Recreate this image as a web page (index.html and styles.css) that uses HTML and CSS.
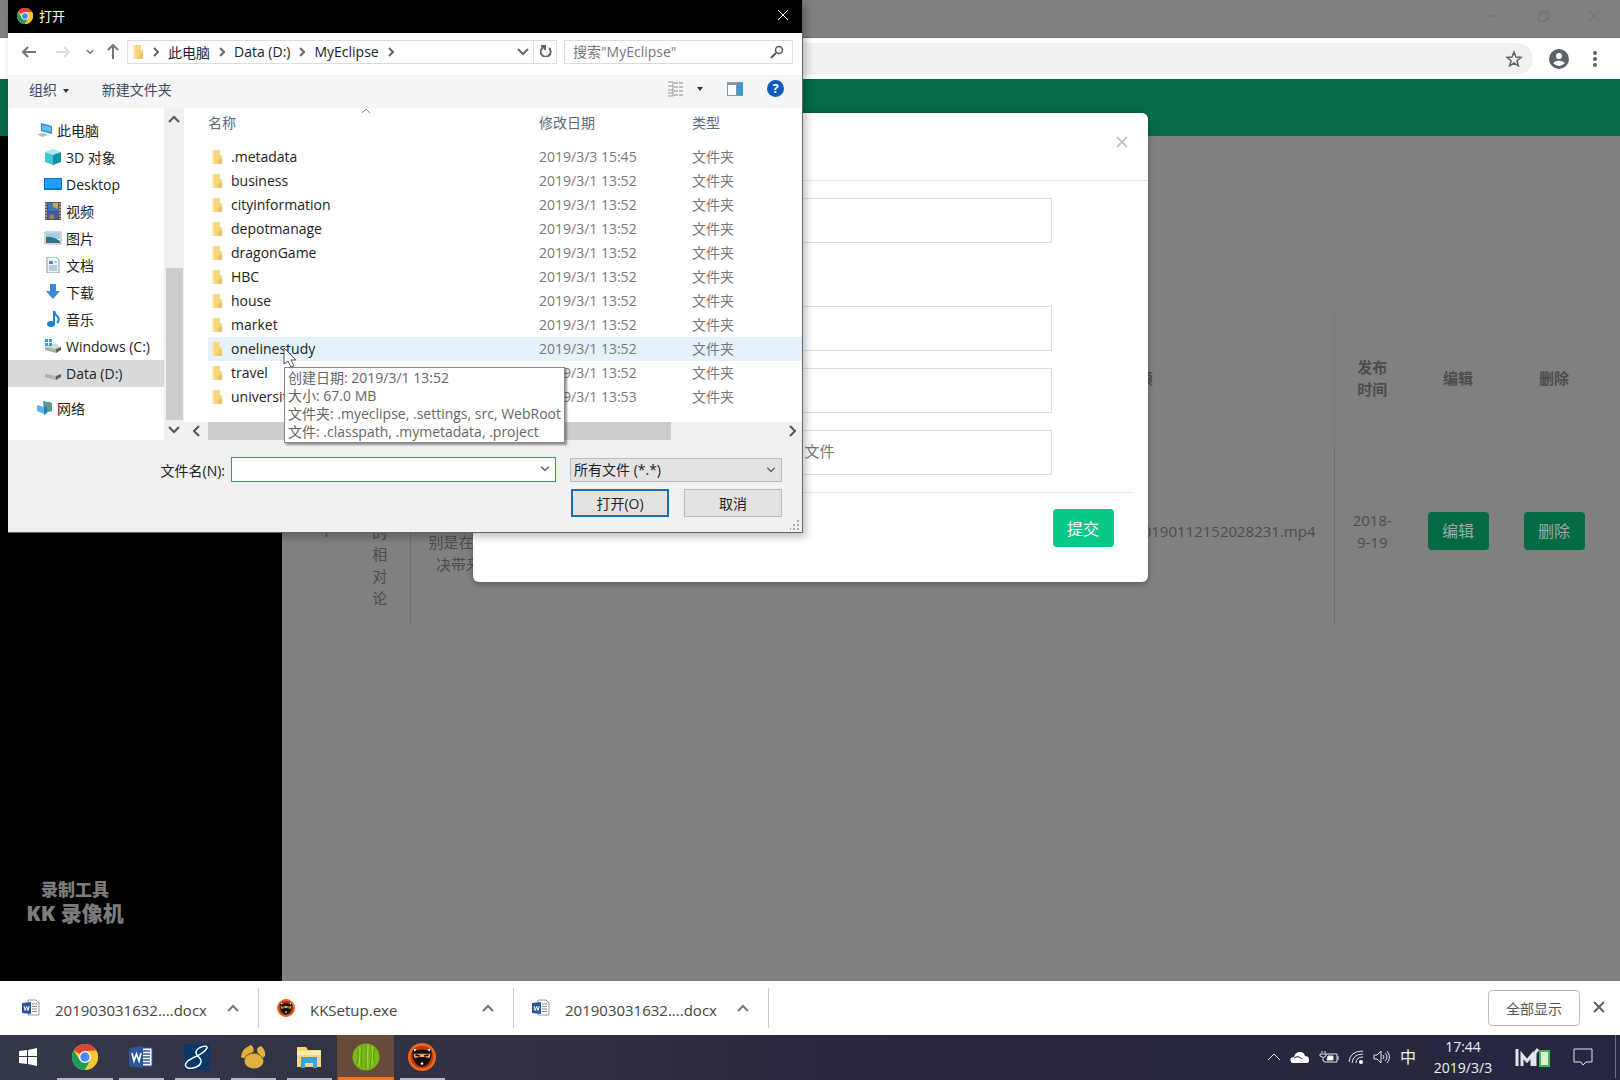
FILE: index.html
```html
<!DOCTYPE html>
<html lang="zh-CN">
<head>
    <meta charset="UTF-8">
    <meta name="viewport" content="width=device-width, initial-scale=1.0">
    <title>打开</title>
    <link rel="stylesheet" href="styles.css">
</head>
<body>
    <!-- shared icons -->
    <svg class="defs" width="0" height="0" aria-hidden="true">
        <symbol id="chrome" viewBox="0 0 24 24">
            <circle cx="12" cy="12" r="12" fill="#f7c72f"/>
            <path d="M12 12L1.600 6A12 12 0 0 1 22.400 6L12 6.500z" fill="#dc4437"/>
            <path d="M1.600 6A12 12 0 0 0 12 24L17 14.700L12 12L7 14.700z" fill="#1d9d58"/>
            <path d="M12 6.500H22.700A12 12 0 0 1 12 24L17 14.700z" fill="#f7c72f"/>
            <circle cx="12" cy="12" r="5.500" fill="#fff"/>
            <circle cx="12" cy="12" r="4.300" fill="#4788ee"/>
        </symbol>
        <symbol id="folder" viewBox="0 0 12 16">
            <path d="M1 1h8v5h2v9H1z" fill="#f6d77c"/>
            <path d="M1 1h2v14H1z" fill="#fbe9ae"/>
            <path d="M8 9h3v6H6z" fill="#e9c566"/>
        </symbol>
        <symbol id="down" viewBox="0 0 12 8">
            <path d="M1 1l5 5 5-5" fill="none" stroke="currentColor" stroke-width="2"/>
        </symbol>
        <symbol id="word-doc" viewBox="0 0 18 18">
            <path d="M6 1h8l3 3v12H6z" fill="#fff" stroke="#9a9a9a"/>
            <path d="M10 5h5M10 7.500h5M10 10h5M10 12.500h5" stroke="#7c8ca8"/>
            <path d="M0 4l9-1v12l-9-1z" fill="#2b579a"/>
            <path d="M2 7l1.200 4.500L4.600 7.500l1.400 4L7.200 7" fill="none" stroke="#fff"/>
        </symbol>
        <symbol id="kk" viewBox="0 0 26 26">
            <circle cx="13" cy="13" r="13" fill="#f0641e"/>
            <circle cx="13" cy="13" r="10.500" fill="#b23a0c"/>
            <path d="M5 5l4 2q4-2 8 0l4-2q2 6 0 10-3 7-8 7t-8-7q-2-4 0-10z" fill="#17100f"/>
            <path d="M5 10h16l-1 4-5-1h-4l-5 1z" fill="#f2a067"/>
            <path d="M7 11l4 1M19 11l-4 1" stroke="#17100f" stroke-width="1.500"/>
            <path d="M5 5l3 1-2 2zM21 5l-3 1 2 2z" fill="#fff"/>
            <circle cx="13" cy="19" r="1.200" fill="#fff"/>
        </symbol>
        <symbol id="drive" viewBox="0 0 18 16">
            <path d="M1 9l4-3h8l4 4-5 2z" fill="#d8dad8"/>
            <path d="M1 9l11 2v4L1 12z" fill="#a9aeac"/>
            <path d="M12 11l5-2v3l-5 3z" fill="#59605e"/>
            <path d="M8 11h2v2H8z" fill="#7fe08a"/>
        </symbol>
    </svg>

    <div class="titlebar">
        <svg width="12" height="12" viewBox="0 0 12 12"><path d="M2 6h8"/></svg>
        <svg width="12" height="12" viewBox="0 0 12 12"><path d="M1 3h7v8H1zM3 3V1h8v8H8"/></svg>
        <svg width="12" height="12" viewBox="0 0 12 12"><path d="M1 1l10 10M11 1L1 11"/></svg>
    </div>
    <div class="toolbar">
        <div class="omnibox">
            <svg width="18" height="18" viewBox="0 0 18 18"><path d="M9 2l2 5 5 .4-4 3.400 1.300 5L9 13l-4.300 2.800 1.300-5-4-3.400L7 7z" fill="none" stroke="#5f6368" stroke-width="1.500"/></svg>
        </div>
        <svg class="account" width="20" height="20" viewBox="0 0 20 20"><circle cx="10" cy="10" r="10" fill="#5f6368"/><circle cx="10" cy="7" r="3" fill="#fff"/><path d="M4 14q6-5 12 0-6 6-12 0z" fill="#fff"/></svg>
        <svg width="4" height="16" viewBox="0 0 4 16" fill="#5f6368"><circle cx="2" cy="2" r="2"/><circle cx="2" cy="8" r="2"/><circle cx="2" cy="14" r="2"/></svg>
    </div>

    <div class="site">
        <div class="site-header"></div>
        <div class="site-body">
            <div class="sidebar">
                <div class="watermark">
                    <span class="wm-small">录制工具</span>
                    <span class="wm-big">KK 录像机</span>
                </div>
            </div>
            <div class="content">
                <table class="courses">
                    <colgroup>
                        <col class="c-id"><col class="c-name"><col class="c-desc"><col class="c-video"><col class="c-date"><col class="c-act"><col class="c-act">
                    </colgroup>
                    <thead>
                        <tr>
                            <th></th>
                            <th></th>
                            <th class="line"></th>
                            <th>视频</th>
                            <th class="line">发布时间</th>
                            <th>编辑</th>
                            <th>删除</th>
                        </tr>
                    </thead>
                    <tbody>
                        <tr>
                            <td>1</td>
                            <td class="name">的相对论</td>
                            <td class="line desc"><span>别是在解决<br>决带来的</span></td>
                            <td class="video">20190112152028231.mp4</td>
                            <td class="line">2018-<br>9-19</td>
                            <td><button class="btn">编辑</button></td>
                            <td><button class="btn">删除</button></td>
                        </tr>
                    </tbody>
                </table>
            </div>
        </div>

        <form class="modal" onsubmit="return false">
            <div class="modal-header">
                <button type="button" class="modal-close" aria-label="关闭"><svg width="12" height="12" viewBox="0 0 12 12"><path d="M1 1l10 10M11 1L1 11" stroke="#c4c4c4" stroke-width="2"/></svg></button>
            </div>
            <div class="modal-body">
                <input class="field first" type="text" aria-label="名称">
                <input class="field" type="text" aria-label="类型">
                <input class="field" type="text" aria-label="日期">
                <label class="field file">文件<input type="file"></label>
            </div>
            <div class="modal-footer">
                <button class="btn submit">提交</button>
            </div>
        </form>
    </div>

    <div class="downloads">
        <div class="download">
            <svg width="18" height="18"><use href="#word-doc"/></svg>
            <span>201903031632....docx</span>
            <svg class="up" width="12" height="8"><use href="#down"/></svg>
        </div>
        <div class="download">
            <svg width="18" height="18"><use href="#kk"/></svg>
            <span>KKSetup.exe</span>
            <svg class="up" width="12" height="8"><use href="#down"/></svg>
        </div>
        <div class="download">
            <svg width="18" height="18"><use href="#word-doc"/></svg>
            <span>201903031632....docx</span>
            <svg class="up" width="12" height="8"><use href="#down"/></svg>
        </div>
        <button class="show-all">全部显示</button>
        <button class="bar-close" aria-label="关闭"><svg width="12" height="12" viewBox="0 0 12 12"><path d="M1 1l10 10M11 1L1 11" stroke="#5f6368" stroke-width="2"/></svg></button>
    </div>

    <div class="taskbar">
        <div class="app start">
            <svg width="20" height="20" viewBox="0 0 20 20" fill="#fff"><path d="M1 4l8-1v6H1zM10 3l9-2v8h-9zM1 10h8v7l-8-1zM10 10h9v9l-9-2z"/></svg>
        </div>
        <div class="app open wide"><svg width="26" height="26"><use href="#chrome"/></svg></div>
        <div class="app open">
            <svg width="24" height="24" viewBox="0 0 24 24"><path d="M12 3h11v18H12z" fill="#fff" stroke="#2b579a"/><path d="M14 6h7M14 9h7M14 12h7M14 15h7M14 18h7" stroke="#2b579a" stroke-width="1.500"/><path d="M0 3l14-2v22L0 21z" fill="#2b579a"/><path d="M3 8l2 8 2.500-7L10 16l2-8" fill="none" stroke="#fff" stroke-width="1.600"/></svg>
        </div>
        <div class="app open">
            <svg width="26" height="26" viewBox="0 0 26 26"><path d="M0 0h26v26H0z" fill="#0d3768"/><path d="M23 4C24 0 13 3 12 8c-1 4 6 5 5 10-1 5-9 7-13 6-5-2-2-7 3-9 5-3 13-5 16-11z" fill="none" stroke="#fff" stroke-width="1.500"/></svg>
        </div>
        <div class="app open">
            <svg width="26" height="26" viewBox="0 0 26 26" fill="#e2b13c"><ellipse cx="14" cy="17" rx="9.500" ry="7.500"/><path d="M1 13Q2 4 11 1q5 4 1 8-5 1-5 5-3 1-6-1zM18 9q-3-5 3-7 5 4 4 10l-3 3q-1-4-4-6z"/><path d="M5 14q2-5 9-5 7 1 9 6" fill="none" stroke="#7a5d20"/></svg>
        </div>
        <div class="app open">
            <svg width="26" height="24" viewBox="0 0 26 24"><path d="M1 2h9l2 3h13v17H1z" fill="#f7d774"/><path d="M1 6h24v4H1z" fill="#fdeaa6"/><path d="M5 12h16v11h-4v-5H9v5H5z" fill="#35a3dc"/></svg>
        </div>
        <div class="app open wide active">
            <svg width="28" height="28" viewBox="0 0 28 28"><circle cx="14" cy="14" r="13.500" fill="#79b818"/><path d="M6 5q1 9-1 16M10 2q-2 12 0 23M14 1v26M18 2q3 11-1 24M23 5q-3 9 0 15" fill="none" stroke="#5f9a14"/><path d="M8 4q0 10-1 19M16 2q-1 12 0 24M20 4q1 10 0 18" fill="none" stroke="#a9dc3c"/></svg>
        </div>
        <div class="app open"><svg width="28" height="28"><use href="#kk"/></svg></div>

        <div class="tray">
            <svg width="14" height="8" viewBox="0 0 14 8"><path d="M1 7l6-6 6 6"/></svg>
            <svg width="20" height="14" viewBox="0 0 20 14"><path d="M1 12q-2-5 3-5 1-5 6-5 4 0 5 4 4 0 4 4 0 3-2 3H3q-2 0-2-1z" fill="#fff" stroke="none"/><path d="M4 8q4-3 8 1"  stroke="#29283d"/></svg>
            <svg width="20" height="14" viewBox="0 0 20 14"><path d="M7 4h11v8H6M3 1v2M6 1v2M1 4h6v2q-2 3-6 0zM4 7v3q0 2 2 2M19 6v4"/><path d="M9 6h5v4H8z" fill="#fff"/></svg>
            <svg width="16" height="16" viewBox="0 0 16 16"><path d="M1 13Q2 2 15 2M4 14q1-9 11-9M8 14q0-6 7-6"/><circle cx="13" cy="13" r="2" fill="#fff" stroke="none"/></svg>
            <svg width="18" height="14" viewBox="0 0 18 14"><path d="M1 5h3l4-4v12L4 9H1zM10 5q2 2 0 4M12 3q4 4 0 8M14 1q5 6 0 12"/></svg>
            <span class="ime">中</span>
            <div class="clock"><span>17:44</span><span>2019/3/3</span></div>
            <svg width="36" height="20" viewBox="0 0 36 20"><path d="M2 2v17M7 19V8l5 6 5-6v11M20 19V6l3-4" stroke-width="3"/><rect x="25" y="4" width="9" height="15" fill="#d5f5d2" stroke="#3fb950" stroke-width="2"/></svg>
            <svg class="note" width="20" height="20" viewBox="0 0 20 20"><path d="M1 2h18v13h-6l-3 3-2-3H1z"/></svg>
        </div>
    </div>

    <!-- file picker -->
    <div class="dialog">
        <div class="dialog-title">
            <svg width="16" height="16"><use href="#chrome"/></svg>
            <span>打开</span>
            <button aria-label="关闭"><svg width="12" height="12" viewBox="0 0 12 12"><path d="M1 1l10 10M11 1L1 11" stroke="#fff"/></svg></button>
        </div>
        <div class="nav-row">
            <svg class="arrow" width="14" height="12" viewBox="0 0 14 12"><path d="M6 1L1 6l5 5M1 6h13"/></svg>
            <svg class="arrow off" width="14" height="12" viewBox="0 0 14 12"><path d="M8 1l5 5-5 5M13 6H0"/></svg>
            <svg class="recent" width="8" height="6"><use href="#down"/></svg>
            <svg class="arrow parent" width="12" height="16" viewBox="0 0 12 16"><path d="M1 6l5-5 5 5M6 1v14"/></svg>
            <div class="address">
                <svg width="12" height="16"><use href="#folder"/></svg>
                <svg class="sep" width="6" height="10" viewBox="0 0 6 10"><path d="M1 1l4 4-4 4"/></svg>
                <span>此电脑</span>
                <svg class="sep" width="6" height="10" viewBox="0 0 6 10"><path d="M1 1l4 4-4 4"/></svg>
                <span>Data (D:)</span>
                <svg class="sep" width="6" height="10" viewBox="0 0 6 10"><path d="M1 1l4 4-4 4"/></svg>
                <span>MyEclipse</span>
                <svg class="sep" width="6" height="10" viewBox="0 0 6 10"><path d="M1 1l4 4-4 4"/></svg>
                <svg class="history" width="12" height="8"><use href="#down"/></svg>
                <button class="refresh" aria-label="刷新"><svg width="12" height="12" viewBox="0 0 12 12"><path d="M4 2a5 5 0 1 0 5 1M1 1h4v4" fill="none" stroke="#666" stroke-width="2"/></svg></button>
            </div>
            <div class="search">
                <input type="text" placeholder='搜索"MyEclipse"' aria-label="搜索">
                <svg width="14" height="14" viewBox="0 0 14 14"><circle cx="9" cy="5" r="3.500" fill="none" stroke="#555" stroke-width="1.500"/><path d="M6 8l-5 5" stroke="#555" stroke-width="2"/></svg>
            </div>
        </div>
        <div class="commands">
            <button>组织 <i class="caret"></i></button>
            <button>新建文件夹</button>
            <svg class="view" width="16" height="16" viewBox="0 0 16 16"><path d="M0 1h5v14H0M0 5h5M0 9h5M0 12h5" stroke="#999" fill="none"/><path d="M6 2h10M6 6h10M6 10h10M6 14h10" stroke="#888" stroke-dasharray="4 1"/></svg>
            <i class="caret"></i>
            <svg class="pane" width="16" height="14" viewBox="0 0 16 14"><path d="M0 0h16v14H0z" fill="#8796a4"/><path d="M1 3h8v10H1z" fill="#fff"/><path d="M10 1h6v12h-6z" fill="#3c97d4"/></svg>
            <button class="help" aria-label="帮助">?</button>
        </div>
        <div class="browser">
            <div class="tree">
                <div class="node root"><svg width="16" height="16" viewBox="0 0 16 16"><path d="M4 1l11 3v8L4 9z" fill="#2a8fdc"/><path d="M5 3l9 2v5L5 8z" fill="#63bdf3"/><path d="M0 12l7-1 4 2-6 2z" fill="#a8c5b5"/></svg>此电脑</div>
                <div class="node"><svg width="18" height="16" viewBox="0 0 18 16"><path d="M1 3l8-3 8 3-8 3z" fill="#a8e8ef"/><path d="M1 3l8 3v10l-8-3z" fill="#45c5d6"/><path d="M17 3L9 6v10l8-3z" fill="#148fa8"/></svg>3D 对象</div>
                <div class="node"><svg width="18" height="16" viewBox="0 0 18 16"><path d="M0 2h18v12H0z" fill="#0b78d0"/><path d="M1 3h16v9H1z" fill="#1c9ff5"/></svg>Desktop</div>
                <div class="node"><svg width="18" height="18" viewBox="0 0 18 18"><path d="M1 0h16v18H1z" fill="#555"/><path d="M4 1h10v8H4z" fill="#3d74b8"/><path d="M4 10h10v7H4z" fill="#3a5f9c"/><path d="M9 1h5v6l-5-2z" fill="#d1a858"/><path d="M6 12l4 1v4H5z" fill="#a48149"/><path d="M2 1v16M16 1v16" stroke="#ddd" stroke-dasharray="2 1"/></svg>视频</div>
                <div class="node"><svg width="18" height="16" viewBox="0 0 18 16"><path d="M1 2h16v12H1z" fill="#fff" stroke="#aaa"/><path d="M2 3h14v6H2z" fill="#9bd1f0"/><path d="M2 7q6-1 14 4v2H2z" fill="#356f86"/></svg>图片</div>
                <div class="node"><svg width="18" height="16" viewBox="0 0 18 16"><path d="M3 0h9l3 3v13H3z" fill="#f3f5f7" stroke="#909ba5"/><path d="M5 4h4v3H5z" fill="#3a92cc"/><path d="M10 5h3M5 9h8M5 11h8M5 13h8" stroke="#78a8c8"/></svg>文档</div>
                <div class="node"><svg width="18" height="16" viewBox="0 0 18 16"><path d="M6 0h6v7h4l-7 8-7-8h4z" fill="#3b8ad3"/></svg>下载</div>
                <div class="node"><svg width="18" height="18" viewBox="0 0 18 18"><ellipse cx="7" cy="14" rx="4" ry="3" fill="#1683d8"/><path d="M10 14V1q1 4 4 6 2 3-1 6" fill="none" stroke="#1683d8" stroke-width="2"/></svg>音乐</div>
                <div class="node"><svg width="18" height="16" viewBox="0 0 18 16"><use href="#drive"/><path d="M1 1h3v3H1zM5 1h3v3H5zM1 5h3v3H1zM5 5h3v3H5z" fill="#22a5e8"/></svg>Windows (C:)</div>
                <div class="node selected"><svg width="18" height="16"><use href="#drive"/></svg>Data (D:)</div>
                <div class="node root net"><svg width="16" height="16" viewBox="0 0 16 16"><path d="M6 1l9 2v8l-8 2z" fill="#3596d6"/><circle cx="11" cy="6" r="4" fill="#5b9d86"/><path d="M0 5l7 2v7l-7-3z" fill="#59b5ec"/><path d="M7 7l3-1v7l-3 2z" fill="#277db8"/></svg>网络</div>
            </div>
            <div class="vscroll">
                <svg class="up" width="12" height="8"><use href="#down"/></svg>
                <div class="vthumb"></div>
                <svg width="12" height="8"><use href="#down"/></svg>
            </div>
            <div class="list">
                <svg class="sort" width="10" height="6" viewBox="0 0 10 6"><path d="M1 5l4-4 4 4" fill="none" stroke="#888"/></svg>
                <table class="files">
                    <thead>
                        <tr><th>名称</th><th class="f-date">修改日期</th><th class="f-type">类型</th></tr>
                    </thead>
                    <tbody>
                        <tr><td><svg width="12" height="16"><use href="#folder"/></svg>.metadata</td><td>2019/3/3 15:45</td><td>文件夹</td></tr>
                        <tr><td><svg width="12" height="16"><use href="#folder"/></svg>business</td><td>2019/3/1 13:52</td><td>文件夹</td></tr>
                        <tr><td><svg width="12" height="16"><use href="#folder"/></svg>cityinformation</td><td>2019/3/1 13:52</td><td>文件夹</td></tr>
                        <tr><td><svg width="12" height="16"><use href="#folder"/></svg>depotmanage</td><td>2019/3/1 13:52</td><td>文件夹</td></tr>
                        <tr><td><svg width="12" height="16"><use href="#folder"/></svg>dragonGame</td><td>2019/3/1 13:52</td><td>文件夹</td></tr>
                        <tr><td><svg width="12" height="16"><use href="#folder"/></svg>HBC</td><td>2019/3/1 13:52</td><td>文件夹</td></tr>
                        <tr><td><svg width="12" height="16"><use href="#folder"/></svg>house</td><td>2019/3/1 13:52</td><td>文件夹</td></tr>
                        <tr><td><svg width="12" height="16"><use href="#folder"/></svg>market</td><td>2019/3/1 13:52</td><td>文件夹</td></tr>
                        <tr class="hover"><td><svg width="12" height="16"><use href="#folder"/></svg>onelinestudy</td><td>2019/3/1 13:52</td><td>文件夹</td></tr>
                        <tr><td><svg width="12" height="16"><use href="#folder"/></svg>travel</td><td>2019/3/1 13:52</td><td>文件夹</td></tr>
                        <tr><td><svg width="12" height="16"><use href="#folder"/></svg>universit</td><td>2019/3/1 13:53</td><td>文件夹</td></tr>
                    </tbody>
                </table>
                <div class="hscroll">
                    <svg width="8" height="12" viewBox="0 0 8 12"><path d="M6 1L1 6l5 5"/></svg>
                    <div class="htrack"><div class="hthumb"></div></div>
                    <svg width="8" height="12" viewBox="0 0 8 12"><path d="M2 1l5 5-5 5"/></svg>
                </div>
            </div>
        </div>
        <div class="dialog-footer">
            <div class="footer-row">
                <label for="filename">文件名(N):</label>
                <div class="combo">
                    <input type="text" id="filename">
                    <svg width="10" height="6"><use href="#down"/></svg>
                </div>
                <div class="filter">
                    <select aria-label="文件类型"><option>所有文件 (*.*)</option></select>
                    <svg width="10" height="6"><use href="#down"/></svg>
                </div>
            </div>
            <div class="footer-row buttons">
                <button class="primary">打开(O)</button>
                <button>取消</button>
            </div>
        </div>
        <svg class="grip" width="10" height="10" viewBox="0 0 10 10" fill="#aaa"><path d="M7 0h2v2H7zM7 4h2v2H7zM7 8h2v2H7zM3 4h2v2H3zM3 8h2v2H3zM0 8h1v2H0z"/></svg>
        <div class="tooltip">
            <p>创建日期: 2019/3/1 13:52</p>
            <p>大小: 67.0 MB</p>
            <p>文件夹: .myeclipse, .settings, src, WebRoot</p>
            <p>文件: .classpath, .mymetadata, .project</p>
        </div>
        <svg class="cursor" width="14" height="22" viewBox="0 0 14 22"><path d="M1 1v16l4-3 3 6 3-1-3-6h5z" fill="#fff" stroke="#555"/></svg>
    </div>
</body>
</html>
```
FILE: styles.css
```css
* {
    box-sizing: border-box;
}
body {
    margin: 0;
    min-height: 100vh;
    display: flex;
    flex-direction: column;
    position: relative;
    background: #808080;
    font-family: "Open Sans", "Noto Sans CJK SC", sans-serif;
    font-size: 14px;
    color: #222;
}
button, input, select {
    font: inherit;
    color: inherit;
}
button {
    padding: 0;
    border: none;
    background: none;
}
svg {
    flex: none;
}
.defs {
    position: absolute;
}
.up {
    transform: rotate(180deg);
}

/* browser window */
.titlebar {
    height: 38px;
    padding: 10px 20px 0 0;
    display: flex;
    justify-content: flex-end;
    gap: 38px;
    border-bottom: 1px solid #6e6e6e;
}
.titlebar svg {
    fill: none;
    stroke: #6c6c6c;
}
.toolbar {
    height: 41px;
    padding: 0 23px 0 28px;
    display: flex;
    align-items: center;
    background: #fff;
}
.omnibox {
    flex: 1;
    height: 32px;
    padding-right: 10px;
    display: flex;
    align-items: center;
    justify-content: flex-end;
    border-radius: 16px;
    background: #f1f1f1;
}
.account {
    margin: 0 24px 0 16px;
}

/* site */
.site {
    flex: 1;
    display: flex;
    flex-direction: column;
    position: relative;
}
.site-header {
    height: 57px;
    background: #056b47;
}
.site-body {
    flex: 1;
    display: flex;
}
.sidebar {
    width: 282px;
    padding: 0 0 56px 26px;
    display: flex;
    align-items: flex-end;
    background: #000;
}
.watermark {
    width: 98px;
    display: flex;
    flex-direction: column;
    align-items: center;
    color: #7c7c7c;
    font-weight: 900;
    white-space: nowrap;
}
.wm-small {
    font-size: 17px;
    line-height: 22px;
}
.wm-big {
    font-size: 21px;
    line-height: 24px;
}
.content {
    flex: 1;
    padding: 174px 18px 0 20px;
}
.courses {
    width: 100%;
    table-layout: fixed;
    border-collapse: collapse;
    text-align: center;
    line-height: 22px;
    font-size: 15px;
    color: #4c4c4c;
}
.courses th {
    height: 138px;
    padding: 0 18px 2px;
}
.courses td {
    height: 176px;
    padding: 0 8px 10px;
}
.courses .line {
    border-left: 1px solid #6c6c6c;
}
.courses th.line {
    border-color: #777;
}
.courses .name {
    padding: 0 22px 15px;
    vertical-align: bottom;
}
.courses .desc {
    padding: 34px 18px 0;
    text-align: left;
}
.desc span {
    display: inline-block;
    text-align: center;
}
.courses .video {
    padding-right: 18px;
    text-align: right;
}
.c-id {
    width: 48px;
}
.c-name {
    width: 60px;
}
.c-video {
    width: 392px;
}
.c-date {
    width: 76px;
}
.c-act {
    width: 96px;
}
.btn {
    width: 61px;
    height: 38px;
    border-radius: 4px;
    background: #026b44;
    color: #a0aaa5;
    font-size: 16px;
}

/* edit form */
.modal {
    position: absolute;
    top: 34px;
    left: 0;
    right: 0;
    width: 675px;
    margin: 0 auto;
    border-radius: 6px;
    background: #fff;
    box-shadow: 0 2px 6px rgba(0, 0, 0, 0.3);
}
.modal-header {
    height: 68px;
    padding: 20px 20px 0;
    border-bottom: 1px solid #e5e5e5;
    text-align: right;
}
.modal-body {
    padding: 17px 96px 17px 120px;
    display: flex;
    flex-direction: column;
    gap: 17px;
}
.field {
    width: 100%;
    height: 45px;
    border: 1px solid #ddd;
    background: #fff;
}
.first {
    margin-bottom: 46px;
}
.file {
    padding-left: 211px;
    line-height: 40px;
    font-size: 15px;
    color: #777;
}
.file input {
    display: none;
}
.modal-footer {
    height: 90px;
    margin: 0 15px;
    padding: 16px 19px 0;
    border-top: 1px solid #e5e5e5;
    text-align: right;
}
.submit {
    background: #06c985;
    color: #fff;
}

/* downloads bar */
.downloads {
    height: 54px;
    padding: 0 15px 1px 4px;
    display: flex;
    align-items: center;
    background: #fff;
}
.download {
    width: 255px;
    height: 40px;
    padding: 0 19px 0 18px;
    display: flex;
    align-items: center;
    border-right: 1px solid #ccc;
    color: #444;
    font-size: 15px;
}
.download span {
    flex: 1;
    padding: 4px 0 0 15px;
}
.download .up {
    color: #777;
}
.show-all {
    width: 92px;
    height: 36px;
    margin: 0 13px 0 auto;
    border: 1px solid #bbb;
    border-radius: 4px;
    color: #555;
}

/* taskbar */
.taskbar {
    height: 45px;
    display: flex;
    background: linear-gradient(90deg, #32384a, #322f42 35%, #29263d 50%, #252740);
}
.app {
    width: 56px;
    padding: 0 6px 2px;
    display: flex;
    flex-direction: column;
    align-items: center;
    justify-content: center;
    position: relative;
}
.open::after {
    content: "";
    position: absolute;
    left: 6px;
    right: 5px;
    bottom: 0;
    height: 2px;
    background: #b9b9c6;
}
.wide {
    width: 57px;
}
.wide::after {
    left: 1px;
    right: 0;
}
.active {
    background: #684a3a;
}
.active::after {
    height: 3px;
    background: #fa7416;
}
.tray {
    flex: 1;
    padding: 0 4px 2px 0;
    display: flex;
    align-items: center;
    justify-content: flex-end;
    gap: 9px;
    color: #f0f0f5;
}
.tray svg {
    fill: none;
    stroke: #e4e4ee;
}
.ime {
    font-size: 16px;
    line-height: 20px;
}
.clock {
    width: 76px;
    margin-right: 5px;
    display: flex;
    flex-direction: column;
    align-items: center;
    line-height: 21px;
}
.tray .note {
    width: 42px;
    height: 20px;
    margin-left: 2px;
}
.tray::after {
    content: "";
    width: 1px;
    height: 43px;
    margin-left: 2px;
    background: #6f7083;
}

/* file dialog */
.dialog {
    position: absolute;
    top: 0;
    left: 8px;
    width: 795px;
    border: 1px solid #666;
    border-top: none;
    border-left: none;
    background: #fff;
    box-shadow: 3px 4px 8px rgba(0, 0, 0, 0.25);
}
.dialog-title {
    height: 33px;
    padding: 0 13px 2px 9px;
    display: flex;
    align-items: center;
    gap: 6px;
    background: #000;
    color: #fff;
    font-size: 13px;
}
.dialog-title button {
    margin-left: auto;
}
.nav-row {
    height: 42px;
    padding: 0 9px 4px 14px;
    display: flex;
    align-items: center;
}
.arrow {
    fill: none;
    stroke: #777;
    stroke-width: 2;
    margin-right: 20px;
}
.off {
    stroke: #ddd;
    margin-right: 16px;
}
.recent {
    margin-right: 13px;
    color: #777;
}
.parent {
    margin-right: 8px;
}
.address {
    width: 430px;
    height: 24px;
    margin-right: 7px;
    padding: 0 4px 1px;
    display: flex;
    align-items: center;
    border: 1px solid #ddd;
}
.sep {
    margin: 0 9px;
    fill: none;
    stroke: #666;
    stroke-width: 2;
}
.history {
    margin: 0 4px 0 auto;
    color: #666;
}
.refresh {
    height: 22px;
    padding: 0 0 0 6px;
    border-left: 1px solid #ddd;
    line-height: 12px;
}
.search {
    flex: 1;
    height: 24px;
    padding: 0 8px 1px 8px;
    display: flex;
    align-items: center;
    border: 1px solid #ddd;
}
.search input {
    flex: 1;
    min-width: 0;
    padding: 0;
    border: none;
}
.search input::placeholder {
    color: #777;
}
.commands {
    height: 33px;
    padding: 0 18px 6px 21px;
    display: flex;
    align-items: center;
    background: #f4f5f7;
    color: #3a4a5a;
}
.commands button {
    margin-right: 33px;
}
.caret {
    display: inline-block;
    margin-left: 2px;
    border: 3px solid transparent;
    border-top: 4px solid #333;
    border-bottom: none;
    vertical-align: middle;
}
.view {
    margin: 0 11px 0 auto;
}
.pane {
    margin: 0 24px;
}
.commands .help {
    width: 17px;
    height: 17px;
    margin: 0;
    border-radius: 50%;
    background: #0d5cb8;
    color: #fff;
    font-size: 13px;
    font-weight: bold;
    line-height: 17px;
}
.browser {
    height: 332px;
    display: flex;
}
.tree {
    width: 156px;
    padding-top: 9px;
}
.node {
    height: 27px;
    padding: 0 0 1px 36px;
    display: flex;
    align-items: center;
    gap: 4px;
    white-space: nowrap;
}
.root {
    padding-left: 29px;
}
.selected {
    background: #d9d9d9;
}
.net {
    margin-top: 8px;
}
.vscroll {
    width: 20px;
    padding: 7px 0 6px;
    display: flex;
    flex-direction: column;
    align-items: center;
    background: #f0f0f0;
    color: #555;
}
.vthumb {
    width: 17px;
    height: 152px;
    margin: auto 0 6px;
    background: #cdcdcd;
}
.list {
    flex: 1;
    display: flex;
    flex-direction: column;
    position: relative;
}
.sort {
    position: absolute;
    top: 0;
    left: 177px;
}
.files {
    width: calc(100% - 24px);
    margin-left: 24px;
    table-layout: fixed;
    border-collapse: collapse;
    text-align: left;
    color: #777;
}
.files th {
    height: 37px;
    padding: 0 0 9px;
    font-weight: normal;
    color: #5a6a78;
}
.files td {
    height: 24px;
    padding: 0 0 2px;
}
.files td:first-child {
    padding-left: 3px;
    color: #222;
}
.files td svg {
    margin-right: 8px;
    vertical-align: -3px;
}
.f-date {
    width: 153px;
}
.f-type {
    width: 110px;
}
.hover {
    background: #e5f1fc;
}
.hscroll {
    height: 18px;
    margin-top: auto;
    padding: 0 6px 0 9px;
    display: flex;
    align-items: center;
    background: #f0f0f0;
}
.hscroll svg {
    fill: none;
    stroke: #555;
    stroke-width: 2;
}
.htrack {
    flex: 1;
    margin: 0 7px;
}
.hthumb {
    width: 463px;
    height: 18px;
    background: #cdcdcd;
}
.dialog-footer {
    height: 92px;
    padding: 17px 20px 0 0;
    background: #f0f0f0;
}
.footer-row {
    display: flex;
    justify-content: flex-end;
    align-items: center;
}
.combo {
    position: relative;
    margin: 0 14px 0 6px;
}
.combo input {
    width: 325px;
    height: 25px;
    border: 1px solid #4a7ebb;
    display: block;
}
.combo svg, .filter svg {
    position: absolute;
    top: 9px;
    right: 6px;
    color: #666;
}
.filter {
    position: relative;
}
.filter select {
    appearance: none;
    display: block;
    width: 212px;
    height: 24px;
    padding: 0 3px;
    border: 1px solid #bbb;
    border-radius: 0;
    background: #e3e3e3;
}
.buttons {
    margin-top: 7px;
    gap: 15px;
}
.buttons button {
    width: 98px;
    height: 28px;
    border: 1px solid #bbb;
    background: #e3e3e3;
}
.buttons .primary {
    border: 2px solid #1a6cc0;
}
.grip {
    position: absolute;
    right: 2px;
    bottom: 2px;
}
.tooltip {
    position: absolute;
    top: 367px;
    left: 276px;
    width: 281px;
    height: 76px;
    padding: 1px 3px;
    border: 1px solid #888;
    background: #fff;
    box-shadow: 2px 2px 2px rgba(0, 0, 0, 0.4);
    line-height: 18px;
    color: #666;
    white-space: nowrap;
}
.tooltip p {
    margin: 0;
}
.cursor {
    position: absolute;
    top: 347px;
    left: 275px;
}
```
